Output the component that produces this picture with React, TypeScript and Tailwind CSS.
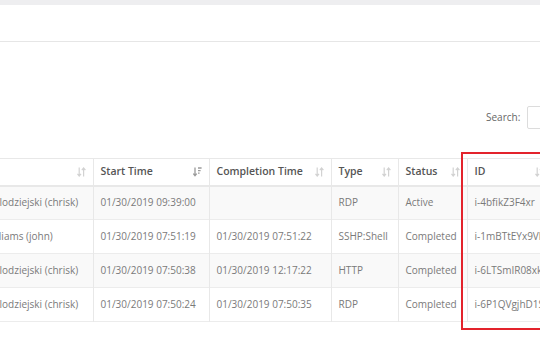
import React from "react"

type Row = { user: string; start: string; end: string; type: string; status: string; id: string; striped: boolean }

const rows: Row[] = [
  { user: "Chris Kolodziejski (chrisk)", start: "01/30/2019 09:39:00", end: "", type: "RDP", status: "Active", id: "i-4bfikZ3F4xr", striped: true },
  { user: "John Williams (john)", start: "01/30/2019 07:51:19", end: "01/30/2019 07:51:22", type: "SSHP:Shell", status: "Completed", id: "i-1mBTtEYx9VkQ", striped: false },
  { user: "Chris Kolodziejski (chrisk)", start: "01/30/2019 07:50:38", end: "01/30/2019 12:17:22", type: "HTTP", status: "Completed", id: "i-6LTSmIR08xkP", striped: true },
  { user: "Chris Kolodziejski (chrisk)", start: "01/30/2019 07:50:24", end: "01/30/2019 07:50:35", type: "RDP", status: "Completed", id: "i-6P1QVgjhD1SA", striped: false },
]

function SortIcon({ active }: { active?: boolean }) {
  const c = active ? "#9a9a9a" : "#d2d2d2"
  if (active) {
    return (
      <svg width="9" height="10" viewBox="0 0 9 10" className="shrink-0">
        <path d="M2 0.5v8M0.3 6.6L2 8.8 3.7 6.6" stroke={c} strokeWidth="1.3" fill="none" />
        <path d="M5 1h3.6M5 3.6h2.6M5 6.2h1.6" stroke={c} strokeWidth="1.3" />
      </svg>
    )
  }
  return (
    <svg width="9" height="10" viewBox="0 0 9 10" className="shrink-0">
      <path d="M2.2 0.5v8.3M0.4 6.8L2.2 9 4 6.8" stroke={c} strokeWidth="1.2" fill="none" />
      <path d="M6.6 9.5V1.2M4.8 3.2L6.6 1 8.4 3.2" stroke={c} strokeWidth="1.2" fill="none" />
    </svg>
  )
}

function Th({ label, active }: { label: string; active?: boolean }) {
  return (
    <th className="h-[27px] border-r border-[#e8e8e8] px-[7px] text-left align-middle text-[10.5px] font-semibold text-[#555]">
      <div className="flex items-center justify-between">
        <span>{label}</span>
        <SortIcon active={active} />
      </div>
    </th>
  )
}

const td = "whitespace-nowrap border-r border-[#e8e8e8] px-[7px]"

export default function App() {
  return (
    <div
      className="relative h-[360px] w-[540px] overflow-hidden bg-white text-[10px]"
      style={{ fontFamily: '"Open Sans", "Liberation Sans", sans-serif' }}
    >
      <div className="h-[5px] bg-[#eeeef0]" />
      <div className="h-[37px] border-b border-[#e6e6e6] bg-white" />

      <div className="flex items-center gap-[7px] pl-[486px] pt-[64px]">
        <span className="text-[#666]">Search:</span>
        <div className="h-[23px] w-[120px] shrink-0 rounded-[2px] border border-[#dcdcdc] bg-white" />
      </div>

      <table className="ml-[-46px] mt-[29px] w-[597px] table-fixed border-collapse">
        <colgroup>
          <col className="w-[139px]" />
          <col className="w-[116px]" />
          <col className="w-[122px]" />
          <col className="w-[67px]" />
          <col className="w-[69px]" />
          <col className="w-[84px]" />
        </colgroup>
        <thead>
          <tr className="border-t border-b-2 border-[#e8e8e8]">
            <Th label="User" />
            <Th label="Start Time" active />
            <Th label="Completion Time" />
            <Th label="Type" />
            <Th label="Status" />
            <Th label="ID" />
          </tr>
        </thead>
        <tbody className="text-[#7a7a7a]">
          {rows.map((r, i) => (
            <tr key={i} className={`h-[34px] border-b border-[#ececec] ${r.striped ? "bg-[#f9f9f9]" : "bg-white"}`}>
              <td className={td}>{r.user}</td>
              <td className={td}>{r.start}</td>
              <td className={td}>{r.end}</td>
              <td className={td}>{r.type}</td>
              <td className={td}>{r.status}</td>
              <td className={td}>{r.id}</td>
            </tr>
          ))}
        </tbody>
      </table>

      <div className="absolute left-[461px] top-[152px] h-[178px] w-[110px] border-2 border-[#e3232c]" />
    </div>
  )
}
